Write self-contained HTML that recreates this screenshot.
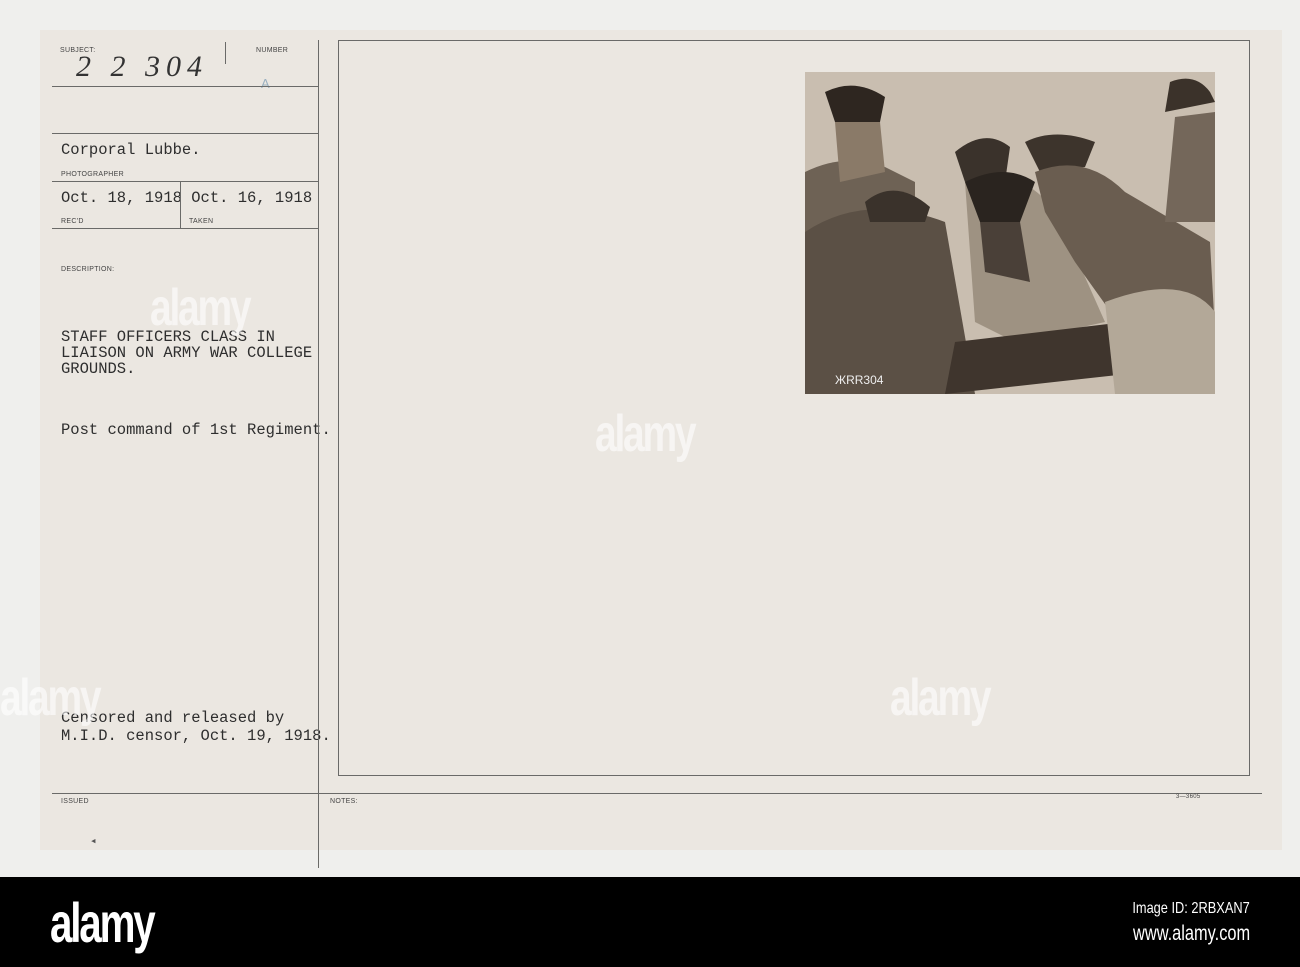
<!DOCTYPE html>
<html><head><meta charset="utf-8"><style>
*{margin:0;padding:0;box-sizing:border-box}
body{width:1300px;height:967px;background:#efefed;position:relative;overflow:hidden;font-family:"Liberation Mono",monospace}
.card{position:absolute;left:40px;top:30px;width:1242px;height:820px;background:#ebe7e1;}
.t{position:absolute;font-family:"Liberation Mono",monospace;font-size:15.5px;color:#2e2e2e;white-space:pre;letter-spacing:0}
.s{position:absolute;font-family:"Liberation Sans",sans-serif;font-size:7px;color:#444;letter-spacing:0.3px}
.h{position:absolute;height:1px;background:#6a6a68}
.v{position:absolute;width:1px;background:#6a6a68}
.bar{position:absolute;left:0;top:877px;width:1300px;height:90px;background:#000}
.wm{position:absolute;font-family:"Liberation Sans",sans-serif;font-weight:bold;color:rgba(255,255,255,.6);font-size:52px;transform:scaleX(.75);transform-origin:left;letter-spacing:-3px}
</style></head><body>
<div class="card"></div>
<div class="s" style="left:60px;top:47px">SUBJECT:</div>
<div class="s" style="left:256px;top:47px">NUMBER</div>
<div style="position:absolute;left:76px;top:50px;font-family:'Liberation Serif',serif;font-style:italic;font-size:30px;color:#333;letter-spacing:6px">2 2 304</div>
<div class="v" style="left:225px;top:42px;height:22px"></div>
<div style="position:absolute;left:261px;top:76px;font-family:'Liberation Sans',sans-serif;font-size:13px;color:#9ab0c0">A</div>
<div class="h" style="left:52px;top:86px;width:266px"></div>
<div class="h" style="left:52px;top:133px;width:266px"></div>
<div class="t" style="left:61px;top:141px">Corporal Lubbe.</div>
<div class="s" style="left:61px;top:171px">PHOTOGRAPHER</div>
<div class="h" style="left:52px;top:181px;width:266px"></div>
<div class="t" style="left:61px;top:189px">Oct. 18, 1918 Oct. 16, 1918</div>
<div class="v" style="left:180px;top:182px;height:46px"></div>
<div class="s" style="left:61px;top:218px">REC'D</div>
<div class="s" style="left:189px;top:218px">TAKEN</div>
<div class="h" style="left:52px;top:228px;width:266px"></div>
<div class="s" style="left:61px;top:266px">DESCRIPTION:</div>
<div class="t" style="left:61px;top:329px;line-height:16px">STAFF OFFICERS CLASS IN
LIAISON ON ARMY WAR COLLEGE
GROUNDS.</div>
<div class="t" style="left:61px;top:421px">Post command of 1st Regiment.</div>
<div class="t" style="left:61px;top:709px;line-height:18px">Censored and released by
M.I.D. censor, Oct. 19, 1918.</div>
<div class="v" style="left:318px;top:40px;height:828px"></div>
<div style="position:absolute;left:338px;top:40px;width:912px;height:736px;border:1px solid #6a6a68"></div>
<div class="h" style="left:52px;top:793px;width:1210px"></div>
<div class="s" style="left:61px;top:798px">ISSUED</div>
<div class="s" style="left:330px;top:798px">NOTES:</div>
<div class="s" style="left:1176px;top:794px;font-size:6px">3—3605</div>
<div style="position:absolute;left:90px;top:834px;font-size:11px;color:#555">◂</div>
<svg style="position:absolute;left:805px;top:72px" width="410" height="322" viewBox="0 0 410 322">
<rect width="410" height="322" fill="#c9beb0"/>
<path d="M0 100 Q40 80 80 95 L110 110 L110 322 L0 322Z" fill="#6e6255"/>
<path d="M20 20 Q50 5 80 25 L75 50 L30 50Z" fill="#2e2620"/>
<path d="M30 50 L75 50 L80 100 L35 110Z" fill="#8a7a68"/>
<path d="M0 160 Q60 120 140 150 L170 322 L0 322Z" fill="#5b5045"/>
<path d="M60 130 Q90 105 125 135 L120 150 L65 150Z" fill="#3a322b"/>
<path d="M150 80 Q180 55 205 75 L200 110 L160 110Z" fill="#3a322b"/>
<path d="M160 110 Q230 90 260 160 L300 250 L210 270 L170 250 L165 180Z" fill="#9e9282"/>
<path d="M220 70 Q250 55 290 70 L280 95 L235 100Z" fill="#3d342c"/>
<path d="M230 100 Q280 80 320 120 L405 170 L410 260 L320 260 L270 190 L240 140Z" fill="#6a5d50"/>
<path d="M160 110 Q200 90 230 110 L215 150 L175 150Z" fill="#2a241f"/>
<path d="M175 150 L215 150 L225 210 L180 200Z" fill="#4a4038"/>
<path d="M365 10 Q390 0 405 20 L410 30 L360 40Z" fill="#3b322a"/>
<path d="M370 45 L410 40 L410 150 L360 150Z" fill="#74675a"/>
<path d="M150 270 L320 250 L340 300 L140 322Z" fill="#3f352d"/>
<path d="M300 230 Q380 200 410 240 L410 322 L310 322Z" fill="#b3a898"/>
<text x="30" y="312" font-family="Liberation Sans" font-size="12" fill="#eee">ЖRR304</text>
</svg>
<div class="bar"></div>
<div style="position:absolute;left:50px;top:890px;font-family:'Liberation Sans',sans-serif;font-weight:bold;font-size:56px;color:#fff;transform:scaleX(.72);transform-origin:left;letter-spacing:-3px">alamy</div>
<div style="position:absolute;right:50px;top:900px;font-family:'Liberation Sans',sans-serif;font-size:16px;color:#fff;transform:scaleX(.8);transform-origin:right">Image ID: 2RBXAN7</div>
<div style="position:absolute;right:50px;top:922px;font-family:'Liberation Sans',sans-serif;font-size:21px;color:#fff;transform:scaleX(.78);transform-origin:right">www.alamy.com</div>
<div class="wm" style="left:150px;top:278px">alamy</div>
<div class="wm" style="left:595px;top:404px">alamy</div>
<div class="wm" style="left:890px;top:668px">alamy</div>
<div class="wm" style="left:0px;top:668px">alamy</div>
</body></html>
